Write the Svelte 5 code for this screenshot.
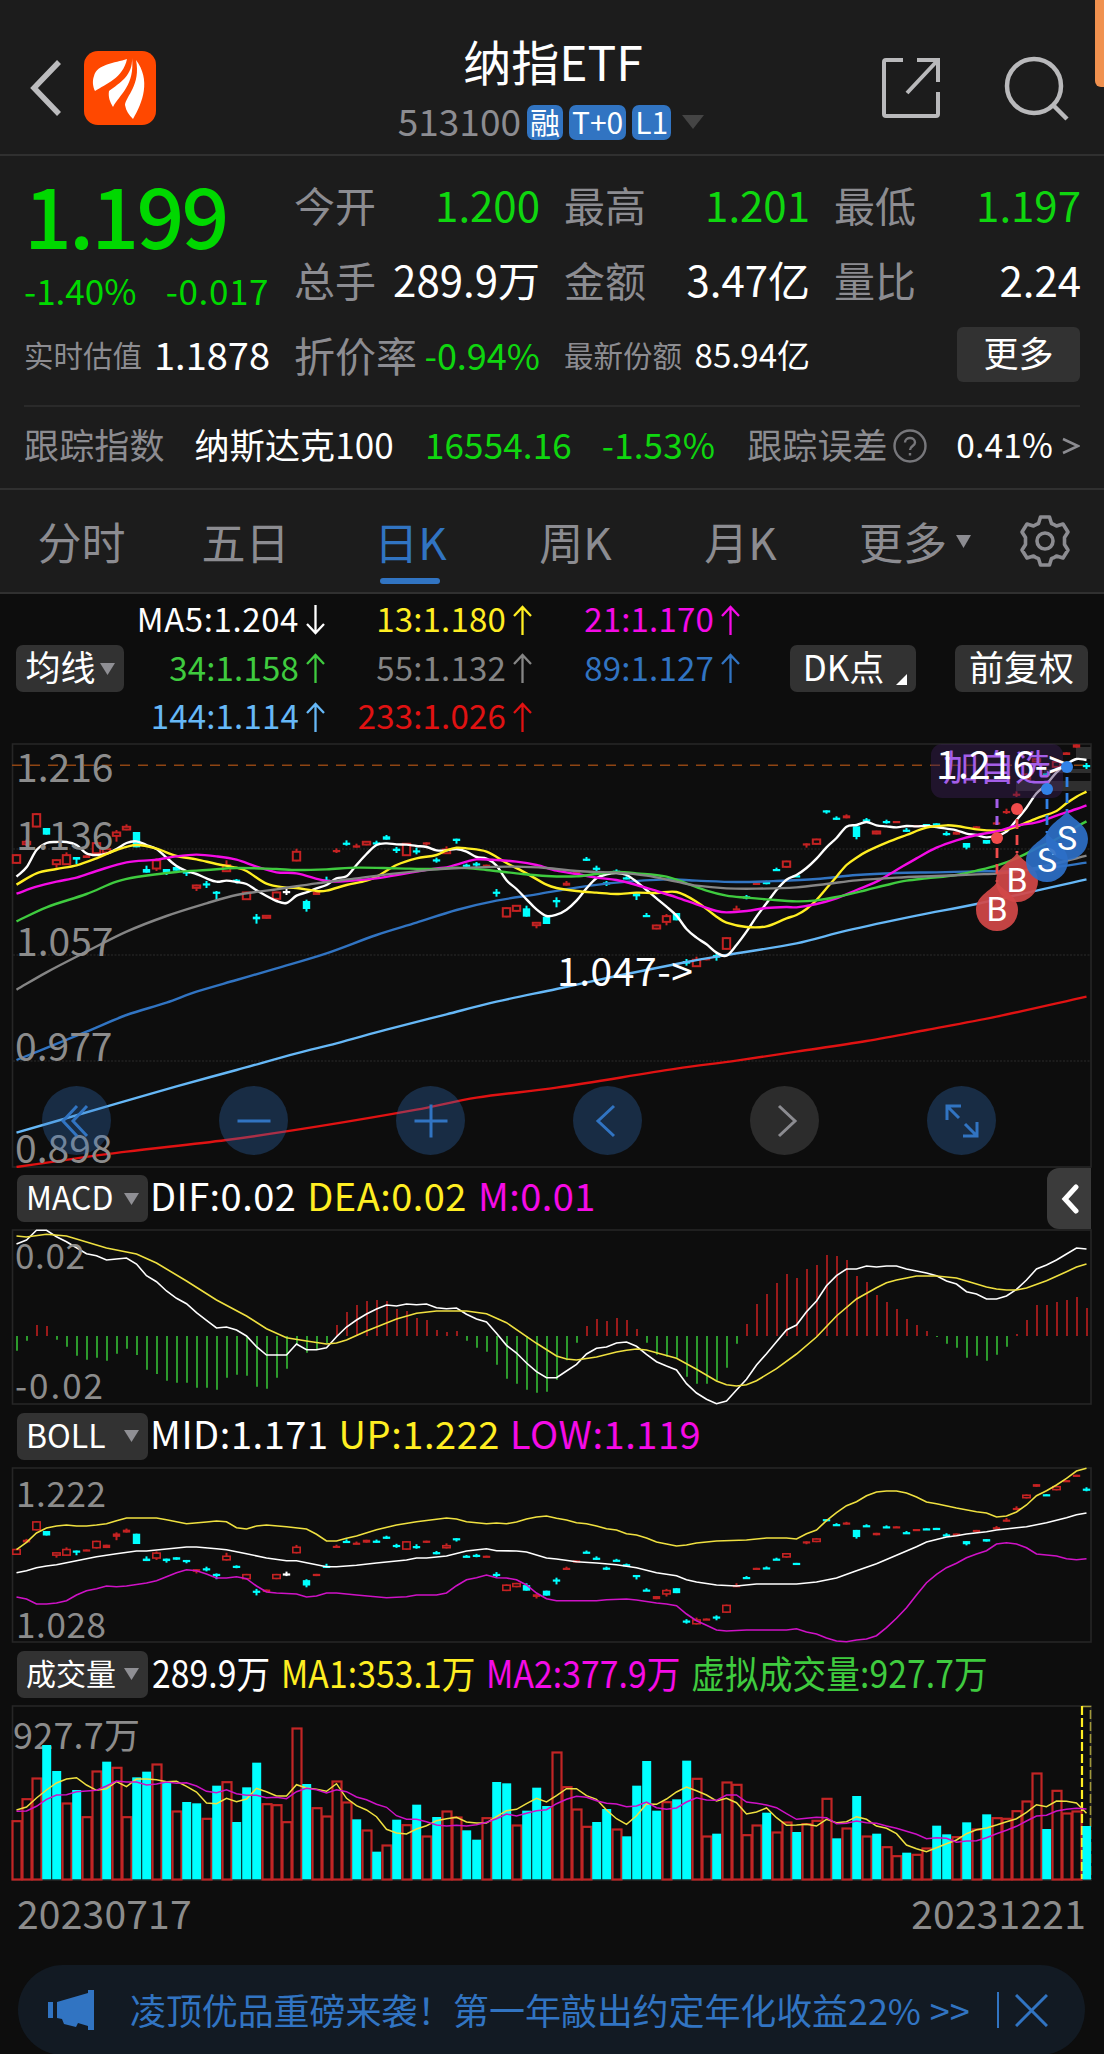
<script lang="ts">
  // Fund quote page: header, quote grid, period tabs, K-line with MACD / BOLL / volume.

  type Candle = { kind: string; top: number; bottom: number; high: number; low: number };

  const STEP = 10;
  const X0 = 16.5;
  const px = (i: number) => X0 + i * STEP;

  const quotes = [
    { label: '今开', value: '1.200', tone: 'down' },
    { label: '最高', value: '1.201', tone: 'down' },
    { label: '最低', value: '1.197', tone: 'down' },
    { label: '总手', value: '289.9万' },
    { label: '金额', value: '3.47亿' },
    { label: '量比', value: '2.24' },
  ];

  const tabs = ['分时', '五日', '日K', '周K', '月K'];
  let active = $state('日K');

  const averages = [
    { text: 'MA5:1.204', color: '#ffffff', up: false },
    { text: '13:1.180', color: '#ffee22', up: true },
    { text: '21:1.170', color: '#f50be6', up: true },
    { text: '34:1.158', color: '#3fcb3f', up: true },
    { text: '55:1.132', color: '#858585', up: true },
    { text: '89:1.127', color: '#3174c2', up: true },
    { text: '144:1.114', color: '#66b8f7', up: true },
    { text: '233:1.026', color: '#e01212', up: true },
  ];

  // Candles: colour, body top, body bottom, then wick top and bottom when there is one.
  // Units are thirds of a pixel, counted downwards.
  const candles: Candle[] = `r358 386|r318 330 314 333|r235 277|c279 299|r373 390 373 398|r358 390 352 390|c366 374 366 387|r361 369|r322 357|r340 355
r290 305 285 320|r273 286 268 286|c291 337|c402 413 392 413|r374 403 370 408|c402 413 402 420|c396 407|c408 416 408 423|r449 461 449 468|c445 449 438 459
c470 474 468 494|r388 411 376 411|c434 438 432 445|r470 495|c545 553 537 566|r540 551|r470 494|w468 473 460 480|r348 379 341 379|c498 522 494 530
r470 480|c434 438 425 442|r345 350 340 354|c323 327 316 332|r331 338 326 338|r318 331|c322 326 317 331|c304 314 300 314|c341 348 336 354|r324 363
c346 350 338 358|r322 327 322 332|c373 377 368 383|r341 357 334 357|c311 318 311 326|c389 393 386 396|c385 390 381 396|r389 396|c470 474 462 485|r517 547
r510 530|c520 545 512 545|r561 573 561 580|c545 567|c495 502 487 517|r443 452 438 452|r410 418|c371 375 366 378|c398 402 392 408|c442 446 438 453
c407 411 403 412|c427 431 424 433|c475 484 475 495|c540 545 534 545|r569 583|r541 563 537 571|c534 556|c678 686 672 692|r672 696 665 696|r669 676
c660 668 655 677|r607 644|r520 525 512 525|c484 490 480 493|r443 450|c441 445 437 448|c402 407 398 407|r377 398|c421 424|r325 330 325 338
r311 329|c226 230 226 236|c248 253 244 255|r241 250 238 250|c274 306 274 313|c253 257 249 260|r287 298|c258 262 254 266|r258 263|c284 288 279 291
r270 276|c267 271|c265 271|c294 299 289 302|r290 299|c324 338 324 343|r274 280|c315 326|r262 267 257 270|r228 232 221 237
r176 181 169 186|r116 134|r70 82|c115 120|r78 98|r52 60|r28 38|c90 95 84 102`
    .split(/[|\n]/)
    .map((s) => {
      const [top, bottom, high = top, low = bottom] = s.slice(1).split(' ').map(Number);
      return { kind: s[0], top, bottom, high, low };
    });

  // Sparse lines are "index,value"; dense ones are plain values.
  const ma = [
    { color: '#3174c2', pts: '0,975 7,890 11,840 15,803 18,770 22,735 26,700 31,655 36,600 40,563 44,525 48,497 52,478 56,458 60,443 65,433 68,437 72,441 76,438 80,432 84,420 88,414 92,412 96,409 100,408 104,396 107,383' },
    { color: '#66b8f7', pts: '0,1193 10,1106 16,1054 22,1005 28,955 32,925 37,884 43,838 48,800 54,762 60,723 67,681 71,660 78,625 83,587 90,542 96,507 107,433' },
    { color: '#e01212', pts: '0,1296 6,1270 11,1250 21,1215 30,1175 40,1124 46,1088 54,1058 66,1001 72,977 78,950 85,918 91,885 98,845 107,785' },
    { color: '#ffffff', pts: '0,425 1,397 2,345 3,324 4,321 5,321 6,330 7,355 8,360 9,356 10,342 11,324 12,319 13,330 14,342 15,368 16,393 17,408 18,417 19,430 20,440 21,437 22,441 23,447 24,466 25,483 26,498 27,504 28,482 29,472 30,460 31,450 32,430 33,424 34,390 35,357 36,330 37,325 38,328 39,329 40,333 41,336 42,346 43,346 44,342 45,350 46,366 47,371 48,392 49,436 50,462 51,493 52,523 53,543 54,539 55,524 56,497 57,460 58,430 59,418 60,414 61,420 62,440 63,465 64,490 65,515 66,542 67,582 68,608 69,628 70,653 71,662 72,630 73,590 74,545 75,505 76,465 77,434 78,420 79,399 80,371 81,337 82,309 83,275 84,270 85,261 86,271 87,274 88,277 89,273 90,274 91,273 92,276 93,281 94,286 95,296 96,300 97,307 98,302 99,290 100,255 101,218 102,175 103,148 104,112 105,88 106,72 107,75' },
    { color: '#ffee22', pts: '0,449 2,415 4,402 6,391 8,370 10,345 12,330 14,341 16,363 18,373 20,387 22,398 23,408 25,446 27,458 28,459 30,468 31,467 33,450 35,437 36,425 38,390 40,370 42,360 43,346 44,338 45,340 47,350 49,384 51,415 53,449 54,459 56,468 58,473 60,477 62,473 64,474 66,471 68,500 70,545 71,563 73,576 75,574 77,550 78,540 79,522 80,495 81,460 82,425 83,390 84,368 85,350 87,323 89,300 91,278 93,271 94,273 96,283 98,287 99,284 100,275 102,250 104,228 105,205 106,185 107,170' },
    { color: '#f50be6', pts: '0,476 2,455 4,440 6,428 8,408 11,382 14,374 16,364 18,359 20,364 22,374 24,395 26,412 28,415 31,438 33,438 36,430 39,415 42,400 43,397 45,380 46,373 48,375 50,380 52,390 54,407 56,417 58,428 60,435 62,450 64,468 66,487 68,508 70,528 71,532 73,528 75,519 77,516 78,517 80,507 82,490 84,465 86,440 88,405 90,370 92,338 94,316 96,300 98,289 100,272 102,262 104,242 106,222 107,211' },
    { color: '#3fcb3f', pts: '0,559 3,517 7,477 10,440 12,426 16,411 19,405 22,399 26,402 28,405 31,403 34,398 38,400 42,402 44,398 47,405 50,415 53,423 56,424 58,417 60,411 62,415 65,425 67,445 69,467 71,482 73,488 75,493 78,499 80,496 82,486 85,465 87,450 89,437 91,430 94,420 96,407 98,392 100,370 102,340 104,312 106,275 107,259' },
    { color: '#858585', pts: '0,764 3,712 7,650 11,590 15,543 19,505 22,480 26,463 30,445 34,430 38,415 42,403 46,397 50,395 53,399 56,408 60,413 63,422 66,440 68,452 71,460 74,461 78,457 81,447 84,436 88,428 92,423 96,418 98,416 101,405 104,385 107,362' },
  ];

  const macd = [
    557, 527, 480, 483, 524, 545, 572, 584, 578, 587, 566, 551, 570, 614, 627, 647, 653, 653, 668, 668, 674, 638, 629, 632, 665, 671, 638, 611,
    537, 563, 553, 535, 480, 441, 420, 408, 405, 408, 432, 438, 459, 465, 495, 501, 498, 527, 548, 560, 599, 641, 656, 674, 683, 680, 644, 586,
    533, 483, 462, 468, 459, 465, 492, 533, 569, 575, 578, 635, 656, 656, 647, 608, 536, 477, 417, 387, 354, 327, 339, 312, 300, 270, 273, 285,
    333, 351, 390, 411, 432, 462, 480, 498, 516, 536, 548, 578, 572, 587, 569, 545, 507, 465, 420, 420, 411, 405, 396, 429,
  ];
  const dif = [
    237, 225, 196, 196, 215, 230, 248, 266, 272, 285, 282, 279, 297, 332, 350, 378, 400, 416, 443, 466, 489, 486, 495, 513, 545, 570, 570, 570,
    537, 554, 554, 548, 515, 486, 465, 447, 432, 420, 423, 417, 419, 417, 428, 431, 429, 448, 462, 471, 505, 541, 564, 594, 620, 638, 638, 618,
    598, 567, 550, 546, 534, 531, 544, 568, 590, 603, 615, 656, 684, 703, 716, 708, 675, 643, 600, 566, 530, 495, 480, 440, 408, 362, 332, 312,
    312, 303, 306, 303, 303, 312, 318, 324, 332, 348, 357, 380, 387, 402, 402, 393, 373, 345, 312, 300, 285, 267, 249, 252,
  ];
  const dea =
    '0,213 1,216 3,208 5,213 7,231 9,249 12,267 14,294 17,348 20,405 23,453 25,491 27,518 29,528 31,537 32,534 33,525 35,498 38,462 40,445 42,438 45,438 47,446 49,473 52,535 54,573 55,582 56,585 58,576 60,561 61,556 62,552 63,555 64,563 66,580 68,613 70,648 71,659 72,663 73,659 74,647 76,611 78,567 80,516 82,453 84,402 86,368 87,353 88,345 90,333 92,333 94,339 95,348 97,366 98,372 99,375 100,375 101,369 103,347 105,320 106,306 107,297';

  const boll = [
    { color: '#efe040', pts: '0,434 1,412 2,384 3,369 4,363 5,360 6,363 7,363 8,360 9,356 10,347 11,339 14,339 15,344 17,356 19,351 20,348 21,350 22,368 23,372 24,363 25,360 27,365 29,372 30,388 31,408 32,408 33,400 34,393 36,374 38,360 40,350 42,343 43,339 44,342 45,350 47,356 48,354 49,356 50,351 51,342 52,336 53,333 54,340 55,345 56,353 57,356 58,363 59,371 60,375 61,386 62,390 63,399 64,411 65,417 66,423 67,420 68,414 70,408 73,405 75,399 77,399 78,402 79,386 80,375 81,347 82,323 83,302 84,290 85,272 86,261 87,258 88,258 89,264 90,276 91,291 92,296 94,309 96,320 97,324 98,336 99,333 100,321 101,300 102,272 103,257 104,240 105,220 106,198 107,190' },
    { color: '#ffffff', pts: '0,503 1,497 2,488 3,483 4,479 6,467 8,455 10,446 12,438 13,438 15,432 17,426 18,426 20,431 21,434 23,446 25,459 27,467 28,467 29,473 31,485 32,485 34,481 36,474 39,465 40,459 41,459 43,453 45,438 47,431 48,437 50,438 51,441 52,450 53,459 54,462 56,470 58,474 60,479 62,488 64,503 66,512 67,524 68,531 70,540 72,543 74,537 78,537 80,531 82,519 84,497 86,476 88,451 90,425 91,411 93,396 94,392 95,387 97,380 98,375 100,368 101,365 103,353 105,338 106,329 107,324' },
    { color: '#cf12c6', pts: '0,576 1,582 2,597 3,597 4,594 5,587 6,570 7,557 8,551 9,543 10,545 11,543 13,534 14,527 15,515 16,503 17,494 18,497 19,507 20,519 21,519 22,515 23,521 24,543 25,561 26,564 28,567 29,576 30,573 31,564 32,564 34,570 37,578 39,575 40,570 42,570 43,564 44,542 45,524 46,518 47,510 48,518 49,519 50,524 51,540 52,564 53,581 54,587 58,587 59,584 61,582 62,585 64,594 65,597 66,602 67,627 68,647 69,661 70,675 71,678 73,675 77,675 78,671 79,681 80,687 81,699 82,708 83,710 84,705 85,702 86,692 87,668 88,640 89,608 90,570 91,533 92,508 93,488 94,475 95,458 96,447 97,437 98,417 99,413 100,417 101,428 102,447 103,450 104,453 105,461 106,464 107,461' },
  ];

  const volumes =
    'r527 r461 r399 c300 c378 r474 c435 r515 r378 c350 r367 r515 c397 c380 r357 c411 r498 c471 c475 r520 c422 r410 c531 c427 c353 r476 r479 r530 r249 c417 r488 r513 r408 r471 c523 r555 c620 r600 c524 r539 c479 r573 c516 r498 r516 c556 c584 r518 c411 c415 r540 c497 c428 c483 r321 r425 r492 r544 c531 c492 r552 c574 c422 c348 c497 r470 c463 c347 r400 r573 c566 r411 r418 r569 r540 c503 r561 r531 c561 r536 r526 r460 c580 r549 c453 r573 c566 r605 r632 c623 r628 r609 c542 c568 r575 c532 r552 c508 r518 r520 r497 r468 r384 c552 r436 r504 r498'
      .split(' ')
      .map((s) => ({ kind: s[0], y: Number(s.slice(1)) / 3 - 60 }));
  const vma1 = [
    495, 486, 459, 435, 414, 402, 398, 420, 436, 431, 410, 425, 402, 402, 404, 410, 409, 424, 441, 474, 476, 460, 470, 462, 430, 440, 453, 453,
    419, 429, 433, 439, 416, 460, 482, 495, 515, 553, 564, 567, 552, 542, 527, 521, 517, 531, 534, 534, 515, 497, 493, 476, 460, 471, 452, 431,
    431, 452, 463, 495, 521, 538, 512, 477, 478, 462, 441, 426, 437, 450, 468, 460, 473, 507, 501, 489, 518, 541, 540, 538, 543, 523, 533, 530,
    515, 523, 543, 550, 566, 600, 611, 620, 608, 596, 585, 566, 554, 549, 540, 530, 521, 502, 479, 485, 468, 469, 474, 505,
  ];
  const vma2 = [
    499, 498, 484, 463, 450, 449, 440, 438, 436, 423, 408, 411, 411, 420, 417, 411, 415, 413, 423, 439, 443, 434, 446, 451, 451, 458, 457, 461,
    440, 430, 434, 444, 434, 440, 456, 464, 478, 487, 512, 523, 523, 530, 540, 543, 541, 543, 539, 532, 521, 507, 513, 505, 497, 494, 476, 463,
    454, 457, 467, 475, 477, 485, 483, 471, 488, 493, 489, 471, 458, 465, 466, 450, 450, 471, 475, 480, 488, 506, 523, 520, 517, 518, 536, 535,
    528, 533, 535, 543, 550, 559, 568, 581, 578, 580, 592, 588, 587, 578, 566, 556, 544, 528, 513, 511, 498, 493, 490, 492,
  ];

  const marks = [
    { letter: 'B', x: 997, dot: 95, pin: 167, color: '#f04b4b', fill: '#d34848' },
    { letter: 'B', x: 1017, dot: 66, pin: 138, color: '#f04b4b', fill: '#d34848' },
    { letter: 'S', x: 1047, dot: 46, pin: 118, color: '#3282e6', fill: '#2c6fc7' },
    { letter: 'S', x: 1067, dot: 24, pin: 96, color: '#3282e6', fill: '#2c6fc7' },
  ];

  const tools = ['first', 'minus', 'plus', 'prev', 'next', 'full'];

  const colorOf = (kind: string) => (kind === 'r' ? '#c42222' : kind === 'c' ? '#00ffff' : '#ffffff');

  function toPoints(src: string | number[], offset: number): number[][] {
    const pairs = typeof src === 'string' ? src.split(' ').map((p) => p.split(',').map(Number)) : src.map((v, i) => [i, v]);
    return pairs.map(([i, v]) => [px(i), v / 3 + offset]);
  }

  function line(src: string | number[], offset: number) {
    return 'M' + toPoints(src, offset).map((p) => `${p[0]} ${p[1].toFixed(1)}`).join('L');
  }

  // Catmull-Rom through the points, written as cubic segments.
  function curve(src: string, offset: number) {
    const p = toPoints(src, offset);
    let d = `M${p[0][0]} ${p[0][1]}`;
    for (let i = 0; i < p.length - 1; i++) {
      const a = p[i - 1] ?? p[i];
      const b = p[i];
      const c = p[i + 1];
      const e = p[i + 2] ?? c;
      const m1 = i ? (c[1] - a[1]) / (c[0] - a[0]) : (c[1] - b[1]) / (c[0] - b[0]);
      const m2 = e === c ? (c[1] - b[1]) / (c[0] - b[0]) : (e[1] - b[1]) / (e[0] - b[0]);
      const h = (c[0] - b[0]) / 3;
      d += `C${b[0] + h} ${b[1] + m1 * h} ${c[0] - h} ${c[1] - m2 * h} ${c[0]} ${c[1]}`;
    }
    return d;
  }

  const mainY = (v: number) => v / 3 - 8;
  // Same price on the BOLL panel: 1333 px per unit there, 897 here.
  const bollY = (v: number) => 1 + (1.222 - (1.136 - (v / 3 - 114) / 1333)) * 897;
</script>

{#snippet candleSet(y: (v: number) => number, thin: boolean)}
  {#each candles as c, i}
    {@const top = y(c.top)}
    {@const h = Math.max(y(c.bottom) - top, 2.2)}
    <line x1={px(i)} x2={px(i)} y1={y(c.high)} y2={y(c.low)} stroke={colorOf(c.kind)} stroke-width="2" />
    {#if c.kind === 'r' && h > 3.4}
      <rect x={px(i) - 3.7} y={top + 0.8} width="7.4" height={h - 1.6} fill="#0d0d0d" stroke="#c42222" stroke-width={thin ? 1.6 : 2} />
    {:else}
      <rect x={px(i) - 3.7} y={top} width="7.4" height={h} fill={colorOf(c.kind)} />
    {/if}
  {/each}
{/snippet}

{#snippet frame(height: number)}
  <rect x="12.5" y="1" width="1078.5" height={height - 2} fill="none" stroke="#262626" stroke-width="1.6" />
{/snippet}

{#snippet picker(name: string)}
  <button class="chip picker" type="button">
    <span>{name}</span>
    <svg width="15" height="12" viewBox="0 0 15 12"><path d="M0 0H15L7.500 12Z" fill="#8f8f94" /></svg>
  </button>
{/snippet}

<div class="page">
  <header class="header">
    <div class="header-side">
      <svg class="back" width="34" height="58" viewBox="0 0 34 58"><path d="M29 3L4 29L29 55" fill="none" stroke="#bcbcbe" stroke-width="5.500" /></svg>
      <svg class="logo" width="72" height="74" viewBox="0 0 72 74">
        <rect width="72" height="74" rx="14" fill="#ff4800" />
        <path d="M43 8C31 12 13 13 10 25C8 30 9 36 11 40C22 33 39 27 43 8Z" fill="#fff" />
        <path d="M48 7C49 24 36 32 25 40C24 46 26 51 29 56C36 43 51 34 48 7Z" fill="#fff" />
        <path d="M52 9C57 34 42 45 41 54C42 60 45 64 49 68C59 51 67 29 52 9Z" fill="#fff" />
      </svg>
    </div>
    <div class="title">
      <h1>纳指ETF</h1>
      <div class="code">
        <span class="digits">513100</span>
        <span class="tag">融</span>
        <span class="tag">T+0</span>
        <span class="tag">L1</span>
        <svg width="22" height="14" viewBox="0 0 22 14"><path d="M0 0H22L11 14Z" fill="#444" /></svg>
      </div>
    </div>
    <div class="header-side right">
      <svg width="62" height="64" viewBox="0 0 62 64" fill="none" stroke="#b9b9bb" stroke-width="4">
        <path d="M23 4H6Q4 4 4 6V58Q4 60 6 60H56Q58 60 58 58V36M37 4H58V26M58 4L27 37" />
      </svg>
      <svg width="66" height="66" viewBox="0 0 66 66" fill="none" stroke="#b9b9bb" stroke-width="4.500">
        <circle cx="31" cy="31" r="27" /><path d="M50 50L64 64" />
      </svg>
    </div>
    <i class="edge"></i>
  </header>

  <section class="quote">
    <div class="price">
      <strong>1.199</strong>
      <div class="change"><span>-1.40%</span><span class="diff">-0.017</span></div>
    </div>
    {#each quotes as q}
      <div class="cell">
        <span class="label">{q.label}</span>
        <span class="value" class:down={q.tone === 'down'}>{q.value}</span>
      </div>
    {/each}
    <div class="cell first">
      <span class="label small">实时估值</span>
      <span class="value mid">1.1878</span>
    </div>
    <div class="cell">
      <span class="label">折价率</span>
      <span class="value rate down">-0.94%</span>
    </div>
    <div class="cell">
      <span class="label small">最新份额</span>
      <span class="value share">85.94亿</span>
    </div>
    <div class="cell end"><button class="more" type="button">更多</button></div>
  </section>

  <section class="track">
    <span class="label">跟踪指数</span>
    <span class="name">纳斯达克100</span>
    <span class="down point">16554.16</span>
    <span class="down">-1.53%</span>
    <span class="label error">跟踪误差</span>
    <svg class="help" width="34" height="34" viewBox="0 0 34 34" fill="none" stroke="#77777b" stroke-width="2.400">
      <circle cx="17" cy="17" r="15.500" />
      <path d="M12 13.500C12 7.500 22 7.500 22 13.500C22 17 17 17 17 21M17 24V26.500" />
    </svg>
    <span class="err-value">0.41%</span>
    <svg class="go" width="18" height="18" viewBox="0 0 18 18"><path d="M1 2L16 9L1 16" fill="none" stroke="#8c8c91" stroke-width="2.500" /></svg>
  </section>

  <nav class="tabs">
    {#each tabs as tab}
      <button type="button" class="tab" class:active={tab === active} onclick={() => (active = tab)}>{tab}</button>
    {/each}
    <button type="button" class="tab tab-more">
      更多<svg width="15" height="13" viewBox="0 0 15 13"><path d="M0 0H15L7.500 13Z" fill="#8c8c91" /></svg>
    </button>
    <svg class="gear" width="54" height="54" viewBox="0 0 54 54" fill="none" stroke="#8c8c91" stroke-width="3.600" stroke-linejoin="round">
      <path d="M22.500 3H31.500L33.500 9.500Q36 10.500 38.500 12L45 10L50 18L46.500 23.500V30.500L50 36L45 44L38.500 42Q36 44 33.500 44.500L31.500 51H22.500L20.500 44.500Q18 44 15.500 42L9 44L4 36L7.500 30.500V23.500L4 18L9 10L15.500 12Q18 10.500 20.500 9.500Z" />
      <circle cx="27" cy="27" r="8" />
    </svg>
  </nav>

  <section class="ma-bar">
    <button class="chip avg" type="button">
      <span>均线</span>
      <svg width="15" height="12" viewBox="0 0 15 12"><path d="M0 0H15L7.500 12Z" fill="#8f8f94" /></svg>
    </button>
    <div class="averages">
      {#each averages as a}
        <div style:color={a.color}>
          <span>{a.text}</span>
          <svg width="19" height="30" viewBox="0 0 19 30" fill="none" stroke="currentColor" stroke-width="2.300">
            <path d={a.up ? 'M9.500 30V2M1 11L9.500 2L18 11' : 'M9.500 0V28M1 19L9.500 28L18 19'} />
          </svg>
        </div>
      {/each}
    </div>
    <button class="chip dk" type="button">
      <span>DK点</span>
      <svg width="11" height="11" viewBox="0 0 11 11"><path d="M11 0V11H0Z" fill="#fff" /></svg>
    </button>
    <button class="chip adjust" type="button"><span>前复权</span></button>
  </section>

  <div class="kline">
    <svg width="1104" height="425" viewBox="0 0 1104 425">
      {@render frame(425)}
      {#each [106, 212, 318] as y}
        <line x1="13" x2="1091" y1={y} y2={y} stroke="#222" stroke-width="1.500" stroke-dasharray="2 1.500" />
      {/each}
      <line x1="12" x2="1091" y1="22.300" y2="22.300" stroke="#8f4513" stroke-width="1.600" stroke-dasharray="10 8" />
      <g fill="#333" opacity=".9">
        <rect x="1076" y="4" width="15" height="12" />
        <rect x="1044" y="26" width="47" height="4" />
        <rect x="1016" y="38" width="75" height="10" />
      </g>
      {@render candleSet(mainY, false)}
      <g fill="none" stroke-width="2.400">
        {#each ma as m}
          <path d={curve(m.pts, -8)} stroke={m.color} />
        {/each}
      </g>
      <g class="axis">
        <text x="16" y="39">1.216</text>
        <text x="16" y="107">1.136</text>
        <text x="16" y="213">1.057</text>
        <text x="15" y="318">0.977</text>
        <text x="15" y="420">0.898</text>
      </g>
      <rect x="931" y="1" width="132" height="54" rx="11" fill="#3b1f58" fill-opacity=".42" />
      <text class="watch" x="943" y="38">加自选</text>
      <line x1="997" x2="997" y1="56" y2="82" stroke="#a45ee8" stroke-width="3" stroke-dasharray="9 8" />
      <text class="peak" x="936" y="36" textLength="134">1.216-&gt;</text>
      <text class="peak" x="557" y="243" textLength="136">1.047-&gt;</text>
      {#each marks as m}
        <line x1={m.x} x2={m.x} y1={m.dot + 10} y2={m.pin - 28} stroke={m.color} stroke-width="2.800" stroke-dasharray="10 6" />
        <circle cx={m.x} cy={m.dot} r="6" fill={m.color} />
        <path
          d="M{m.x} {m.pin - 29}C{m.x + 3} {m.pin - 20} {m.x + 21} {m.pin - 16} {m.x + 21} {m.pin}A21 21 0 0 1 {m.x - 21} {m.pin}C{m.x - 21} {m.pin - 16} {m.x - 3} {m.pin - 20} {m.x} {m.pin - 29}Z"
          fill={m.fill}
          fill-opacity=".92"
        />
        <text class="mark" x={m.x} y={m.pin + 11}>{m.letter}</text>
      {/each}
    </svg>
    <div class="tools">
      {#each tools as tool}
        <button type="button" class="tool" class:off={tool === 'next'} aria-label={tool}>
          <svg width="34" height="34" viewBox="0 0 34 34" fill="none" stroke="currentColor" stroke-width="3">
            {#if tool === 'first'}
              <path d="M17 2L3 17L17 32M27 2L13 17L27 32" />
            {:else if tool === 'minus'}
              <path d="M0.500 17H33.500" />
            {:else if tool === 'plus'}
              <path d="M0.500 17H33.500M17 0.500V33.500" />
            {:else if tool === 'prev'}
              <path d="M23 2L7 17L23 32" />
            {:else if tool === 'next'}
              <path d="M11 2L27 17L11 32" />
            {:else}
              <path d="M16 2H2V16M2 2L14 14M18 32H32V18M32 32L20 20" />
            {/if}
          </svg>
        </button>
      {/each}
    </div>
  </div>

  <div class="legend">
    {@render picker('MACD')}
    <div class="values">
      <span>DIF:0.02</span><span class="yellow">DEA:0.02</span><span class="pink">M:0.01</span>
    </div>
    <button class="collapse" type="button" aria-label="collapse">
      <svg width="20" height="30" viewBox="0 0 20 30"><path d="M17 3L6 15L17 27" fill="none" stroke="#fff" stroke-width="5" stroke-linecap="round" /></svg>
    </button>
  </div>
  <svg width="1104" height="176" viewBox="0 0 1104 176">
    {@render frame(176)}
    {#each macd as v, i}
      <line x1={px(i) + 0.5} x2={px(i) + 0.5} y1="107" y2={v / 3 - 64} stroke={v < 513 ? '#a31c1c' : '#2fa32f'} stroke-width="1.900" />
    {/each}
    <g fill="none" stroke-width="1.600">
      <path d={line(dif, -64)} stroke="#fff" />
      <path d={line(dea, -64)} stroke="#efe040" />
    </g>
    <g class="axis small">
      <text x="15" y="40" textLength="70">0.02</text>
      <text x="15" y="170" textLength="88">-0.02</text>
    </g>
  </svg>

  <div class="legend boll">
    {@render picker('BOLL')}
    <div class="values">
      <span>MID:1.171</span><span class="yellow">UP:1.222</span><span class="pink">LOW:1.119</span>
    </div>
  </div>
  <svg width="1104" height="176" viewBox="0 0 1104 176">
    {@render frame(176)}
    {@render candleSet(bollY, true)}
    <g fill="none" stroke-width="1.600">
      {#each boll as b}
        <path d={line(b.pts, -62)} stroke={b.color} />
      {/each}
    </g>
    <g class="axis small">
      <text x="16" y="40" textLength="90">1.222</text>
      <text x="16" y="171" textLength="90">1.028</text>
    </g>
  </svg>

  <div class="legend volume">
    {@render picker('成交量')}
    <div class="values narrow">
      <span>289.9万</span><span class="yellow">MA1:353.1万</span><span class="pink">MA2:377.9万</span><span class="green">虚拟成交量:927.7万</span>
    </div>
  </div>
  <svg width="1104" height="176" viewBox="0 0 1104 176">
    {@render frame(176)}
    <text class="axis vol" x="13" y="44" textLength="127">927.7万</text>
    {#each volumes as v, i}
      {#if v.kind === 'r'}
        <rect x={px(i) - 4} y={v.y + 0.5} width="9" height={174 - v.y} fill="#0d0d0d" stroke="#c22525" stroke-width="2.200" />
      {:else}
        <rect x={px(i) - 4.3} y={v.y} width="9" height={174.300 - v.y} fill="#00ffff" />
      {/if}
    {/each}
    <path d="M1082 1.500H1090.500V174" fill="none" stroke="#a1983a" stroke-width="1.600" stroke-dasharray="9 3" />
    <line x1="1082" x2="1082" y1="1" y2="174" stroke="#ffee22" stroke-width="2.200" stroke-dasharray="9 3" />
    <rect x="1082.500" y="121" width="8.500" height="53.500" fill="#00ffff" />
    <g fill="none" stroke-width="1.500">
      <path d={line(vma1, -60)} stroke="#efe040" />
      <path d={line(vma2, -60)} stroke="#cf12c6" />
    </g>
  </svg>

  <div class="dates"><span>20230717</span><span>20231221</span></div>

  <footer class="banner">
    <svg class="horn" width="46" height="40" viewBox="0 0 46 40" fill="#3174c2">
      <rect y="12" width="5" height="16" />
      <path d="M9 12L40 3V0H46V40H40V36L30 33L28 37L16 34L14 29L9 28Z" />
    </svg>
    <span class="ad">凌顶优品重磅来袭！第一年敲出约定年化收益22%</span>
    <span class="go-on">&gt;&gt;</span>
    <i></i>
    <svg width="33" height="33" viewBox="0 0 33 33"><path d="M1 1L32 32M32 1L1 32" fill="none" stroke="#3174c2" stroke-width="3" /></svg>
  </footer>
</div>

<style>
  :global(body) {
    background: #0d0d0d;
  }
  .page {
    width: 1104px;
    height: 2054px;
    overflow: hidden;
    background: #0d0d0d;
    color: #fff;
    font-family: 'Noto Sans CJK SC', 'Noto Sans', sans-serif;
    white-space: nowrap;
  }
  .page * {
    box-sizing: border-box;
  }
  button {
    padding: 0;
    border: 0;
    background: none;
    color: inherit;
    font: inherit;
  }
  svg {
    display: block;
    flex: none;
  }
  .label {
    color: #8c8c91;
  }
  .down {
    color: #0fd60f;
  }
  .yellow {
    color: #ffee22;
  }
  .pink {
    color: #f50be6;
  }
  .green {
    color: #3fcb3f;
  }

  .header {
    position: relative;
    display: flex;
    justify-content: space-between;
    height: 156px;
    padding: 0 35px 0 30px;
    background: #1c1c1c;
    border-bottom: 2px solid #303030;
  }
  .header-side {
    display: flex;
    align-items: center;
    gap: 20px;
    width: 195px;
    padding-top: 22px;
  }
  .header-side.right {
    gap: 61px;
    justify-content: flex-end;
    width: 190px;
  }
  .title {
    display: flex;
    flex-direction: column;
    align-items: center;
    padding-top: 30px;
  }
  .title h1 {
    margin: 0;
    padding-left: 2px;
    font-size: 48px;
    line-height: 60px;
    font-weight: 400;
  }
  .code {
    display: flex;
    align-items: center;
    gap: 6px;
    height: 36px;
    margin: 14px 2px 0 0;
  }
  .digits {
    margin-top: -5px;
    color: #8c8c91;
    font-size: 37px;
    line-height: 36px;
  }
  .tag {
    height: 35px;
    padding: 0 3px;
    border-radius: 7px;
    background: #3174c2;
    font-size: 30px;
    line-height: 32px;
  }
  .code svg {
    margin-left: 5px;
  }
  .edge {
    position: absolute;
    top: 0;
    right: 0;
    width: 9px;
    height: 87px;
    border-bottom-left-radius: 6px;
    background: #f0914f;
  }

  .quote {
    display: grid;
    grid-template-columns: 245px 243px 243px 244px;
    grid-template-rows: repeat(3, 75px);
    column-gap: 27px;
    height: 249px;
    padding: 10px 24px 0 24px;
    background: #1c1c1c;
  }
  .price {
    grid-row: span 2;
    color: #00d800;
  }
  .price strong {
    display: block;
    margin-top: 8px;
    font-size: 84px;
    line-height: 78px;
    font-weight: 500;
    letter-spacing: -2.8px;
  }
  .change {
    display: flex;
    justify-content: space-between;
    margin-top: 13px;
    font-size: 35px;
    line-height: 50px;
  }
  .diff {
    letter-spacing: 0.6px;
  }
  .cell {
    display: flex;
    align-items: center;
    justify-content: space-between;
    margin-left: -2px;
    font-size: 41px;
    line-height: 50px;
  }
  .cell.first {
    margin-left: 0;
  }
  .cell .value {
    margin-right: -1px;
    font-size: 42px;
  }
  .cell .small {
    font-size: 29.500px;
  }
  .cell .mid {
    font-size: 38px;
  }
  .cell .rate {
    font-size: 36px;
  }
  .cell .share {
    font-size: 33px;
  }
  .cell.end {
    justify-content: flex-end;
  }
  .more {
    width: 123px;
    height: 55px;
    margin-top: 1px;
    padding-bottom: 5px;
    border-radius: 6px;
    background: #323232;
    font-size: 35px;
    line-height: 50px;
  }

  .track {
    display: flex;
    align-items: center;
    height: 85px;
    padding: 0 24px 5px 1px;
    border-bottom: 2px solid #303030;
    background: linear-gradient(#2a2a2a, #2a2a2a) 24px 0 / 1056px 2px no-repeat #1c1c1c;
    font-size: 35px;
    line-height: 50px;
    letter-spacing: 0.15px;
  }
  .track > .label:first-child {
    margin-left: 23px;
  }
  .name {
    margin-left: 30px;
  }
  .point {
    margin: 0 30px 0 31px;
  }
  .error {
    margin-left: 32px;
  }
  .help {
    margin: 4px 0 0 5px;
  }
  .err-value {
    margin-left: auto;
    font-size: 33.500px;
  }
  .go {
    margin: 4px 0 0 9px;
  }

  .tabs {
    display: flex;
    align-items: center;
    height: 104px;
    border-bottom: 2px solid #303030;
    background: #1c1c1c;
    color: #8c8c91;
    font-size: 44px;
  }
  .tab {
    position: relative;
    width: 165px;
    height: 102px;
    line-height: 97px;
    text-align: center;
  }
  .tab:first-child {
    width: 163px;
  }
  .tab.active {
    color: #3174c2;
  }
  .tab.active::after {
    content: '';
    position: absolute;
    left: 50%;
    bottom: 8px;
    width: 60px;
    height: 6px;
    margin-left: -31px;
    border-radius: 3px;
    background: #3174c2;
  }
  .tab-more {
    display: flex;
    align-items: center;
    gap: 9px;
    width: 121px;
    margin-left: 36px;
  }
  .gear {
    margin-left: 38px;
  }

  .chip {
    display: flex;
    align-items: center;
    justify-content: center;
    height: 47px;
    border-radius: 7px;
    background: #323232;
    font-size: 35px;
    line-height: 42px;
  }
  .chip span {
    margin-top: -5px;
  }
  .ma-bar {
    display: flex;
    align-items: center;
    height: 149px;
    padding: 0 16px;
  }
  .avg {
    width: 108px;
    gap: 4px;
  }
  .averages {
    display: grid;
    grid-template-columns: 201px 207px 208px;
    grid-auto-rows: 48.500px;
    font-size: 33px;
    letter-spacing: 0.2px;
  }
  .averages div {
    display: flex;
    align-items: center;
    justify-content: flex-end;
    gap: 7px;
  }
  .averages div:first-child {
    letter-spacing: 0.6px;
  }
  .averages span {
    margin-top: -4px;
  }
  .averages svg {
    margin-top: -1px;
  }
  .dk {
    width: 126px;
    margin-left: auto;
    gap: 12px;
    padding-left: 4px;
  }
  .dk svg {
    align-self: flex-end;
    margin-bottom: 7px;
  }
  .adjust {
    width: 133px;
    margin-left: 39px;
  }

  .kline {
    position: relative;
  }
  .axis,
  .axis text {
    fill: #8c8c8c;
    font-size: 39px;
  }
  .axis.small text {
    font-size: 35px;
  }
  .axis.vol {
    font-size: 36px;
  }
  .watch {
    fill: #a45ee8;
    font-size: 36px;
  }
  .peak {
    fill: #fff;
    font-size: 39px;
  }
  .mark {
    fill: #fff;
    font-family: Roboto, sans-serif;
    font-size: 34px;
    text-anchor: middle;
  }
  .tools {
    position: absolute;
    top: 343px;
    left: 42px;
    display: flex;
    gap: 108px;
  }
  .tool {
    display: grid;
    place-items: center;
    width: 69px;
    height: 69px;
    border-radius: 50%;
    background: rgba(49, 116, 194, 0.3);
    color: #3174c2;
  }
  .tool.off {
    background: #2c2c2c;
    color: #8c8c91;
  }

  .legend {
    display: flex;
    align-items: center;
    height: 61px;
    padding-left: 17px;
    font-size: 38px;
    line-height: 50px;
  }
  .legend.boll,
  .legend.volume {
    height: 62px;
  }
  .values {
    display: flex;
    gap: 11px;
    margin: -7px 0 0 2px;
    letter-spacing: 0.45px;
  }
  .boll .values {
    gap: 10px;
    letter-spacing: 0.55px;
  }
  .picker {
    justify-content: space-between;
    width: 131px;
    padding: 0 9px;
    font-size: 32px;
  }
  .volume .picker {
    font-size: 30px;
  }
  .values.narrow {
    gap: 12px;
    margin: -5px 0 0 4px;
    letter-spacing: 0.1px;
    transform: scaleX(0.886);
    transform-origin: left;
  }
  .collapse {
    display: grid;
    place-items: center;
    width: 44px;
    height: 61px;
    margin: 0 13px 0 auto;
    border-radius: 12px 0 0 12px;
    background: #3b3b3b;
  }

  .dates {
    display: flex;
    justify-content: space-between;
    height: 84px;
    padding: 0 18px 0 17px;
    color: #8c8c8c;
    font-size: 39px;
    line-height: 63px;
    letter-spacing: 0.2px;
  }
  .banner {
    display: flex;
    align-items: center;
    width: 1067px;
    height: 90px;
    margin-left: 18px;
    padding-left: 30px;
    border-radius: 45px;
    background: #121a23;
    color: #3174c2;
    font-size: 36px;
    line-height: 50px;
  }
  .horn {
    margin-right: 36px;
  }
  .ad {
    margin-top: -3px;
    letter-spacing: -0.1px;
  }
  .go-on {
    margin: -3px 0 0 9px;
  }
  .banner i {
    width: 2px;
    height: 36px;
    margin: 0 16px 0 auto;
    background: #3174c2;
  }
  .banner svg:last-child {
    margin-right: 37px;
  }
</style>
